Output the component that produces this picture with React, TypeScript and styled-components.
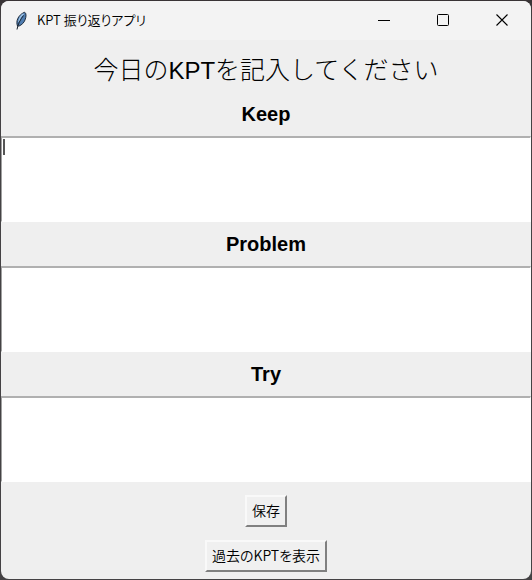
import React from "react";
import styled, { createGlobalStyle } from "styled-components";

const GlobalStyle = createGlobalStyle`
  * { box-sizing: border-box; }
  html, body, #root { height: 100%; }
  body { margin: 0; background: #2b292b; }
`;

const Desktop = styled.div`
  display: flex;
  min-height: 100%;
  padding: 1px;
  background: linear-gradient(#383335, #444244 20px, #444244);
`;

const Window = styled.main`
  flex: 1;
  min-width: 0;
  display: flex;
  flex-direction: column;
  overflow: hidden;
  border-radius: 8px;
  background: #efefef;
  color: #000;
  font-family: "Liberation Sans", "Noto Sans CJK JP", sans-serif;
`;

const TitleBar = styled.header`
  display: flex;
  align-items: center;
  height: 39px;
  padding-left: 12px;
  background: #f3f3f3;
`;

const AppTitle = styled.span`
  flex: 1;
  margin-left: 8px;
  padding-bottom: 2px;
  font-family: "Noto Sans CJK JP", sans-serif;
  font-size: 13px;
  font-weight: 350;
  line-height: 20px;
  font-feature-settings: "palt";
  white-space: nowrap;
`;

const WindowButton = styled.button`
  display: flex;
  align-items: center;
  justify-content: center;
  width: 59px;
  height: 39px;
  padding: 0 0 2px;
  border: 0;
  background: transparent;
  color: #000;
`;

const Heading = styled.h1`
  margin: 12px 0 13px;
  font-size: 25px;
  font-weight: 300;
  line-height: 36px;
  text-align: center;
`;

const Latin = styled.span`
  font-size: 24px;
`;

const Section = styled.section`
  display: flex;
  flex-direction: column;
`;

const Label = styled.label`
  padding: 0 0 10px;
  font-size: 20px;
  font-weight: 700;
  line-height: 24px;
  text-align: center;
`;

const Field = styled.div`
  position: relative;
  display: flex;
  margin-bottom: 10px;
`;

const TextBox = styled.textarea`
  flex: 1;
  min-width: 0;
  height: 86px;
  padding: 1px 2px;
  border: 1px solid #fff;
  border-top: 2px solid #b0b0b0;
  border-left-color: #a0a0a0;
  border-radius: 0;
  outline: 0;
  resize: none;
  background: #fff;
  font-family: "Liberation Mono", "Noto Sans CJK JP", monospace;
  font-size: 13px;
`;

const Caret = styled.span`
  position: absolute;
  top: 3px;
  left: 2px;
  width: 2px;
  height: 16px;
  background: #555;
`;

const Actions = styled.div`
  display: flex;
  flex-direction: column;
  align-items: center;
  gap: 13px;
  padding: 3px 0 7px;
`;

const PushButton = styled.button`
  height: 32px;
  padding: 0 5px 2px;
  border: 2px solid;
  border-color: #f9f9f9 #808080 #808080 #f9f9f9;
  border-radius: 0;
  background: #f0f0f0;
  color: #000;
  font-family: "Noto Sans CJK JP", sans-serif;
  font-size: 14px;
  font-weight: 350;
  line-height: 20px;
  font-feature-settings: "palt";
  white-space: nowrap;
`;

const FeatherIcon = () => (
  <svg width="16" height="20" viewBox="0 0 16 20" aria-hidden="true">
    <path d="M4.5 15C2.8 10.5 4.5 4.5 11.5 1.2c2 .8 1.8 4.5.6 7.6-1 2.8-3.2 5-6 6.2z" fill="#4f7db0" stroke="#1d2b3c" strokeWidth="1" />
    <path d="M6 11C6.4 7.5 8 4.5 10.6 2.8" fill="none" stroke="#9cc2e6" strokeWidth="1.6" />
    <path d="M4 18.5C4.8 13.5 7.2 8.5 10.5 4.5" fill="none" stroke="#17212c" strokeWidth="1" />
  </svg>
);

const sections = [
  { id: "keep", label: "Keep" },
  { id: "problem", label: "Problem" },
  { id: "try", label: "Try" },
];

export default function App() {
  return (
    <>
      <GlobalStyle />
      <Desktop>
        <Window>
          <TitleBar>
            <FeatherIcon />
            <AppTitle>KPT 振り返りアプリ</AppTitle>
            <WindowButton aria-label="最小化">
              <svg width="12" height="12" aria-hidden="true"><path d="M0 6.5H12" stroke="currentColor" /></svg>
            </WindowButton>
            <WindowButton aria-label="最大化">
              <svg width="12" height="12" aria-hidden="true"><rect x=".5" y=".5" width="11" height="11" rx="1" fill="none" stroke="currentColor" /></svg>
            </WindowButton>
            <WindowButton aria-label="閉じる">
              <svg width="12" height="12" aria-hidden="true"><path d="M.5 .5l11 11M11.5 .5l-11 11" stroke="currentColor" strokeWidth="1.1" /></svg>
            </WindowButton>
          </TitleBar>
          <Heading>今日の<Latin>KPT</Latin>を記入してください</Heading>
          {sections.map(({ id, label }, index) => (
            <Section key={id}>
              <Label htmlFor={id}>{label}</Label>
              <Field>
                <TextBox id={id} />
                {index === 0 && <Caret />}
              </Field>
            </Section>
          ))}
          <Actions>
            <PushButton>保存</PushButton>
            <PushButton>過去のKPTを表示</PushButton>
          </Actions>
        </Window>
      </Desktop>
    </>
  );
}
